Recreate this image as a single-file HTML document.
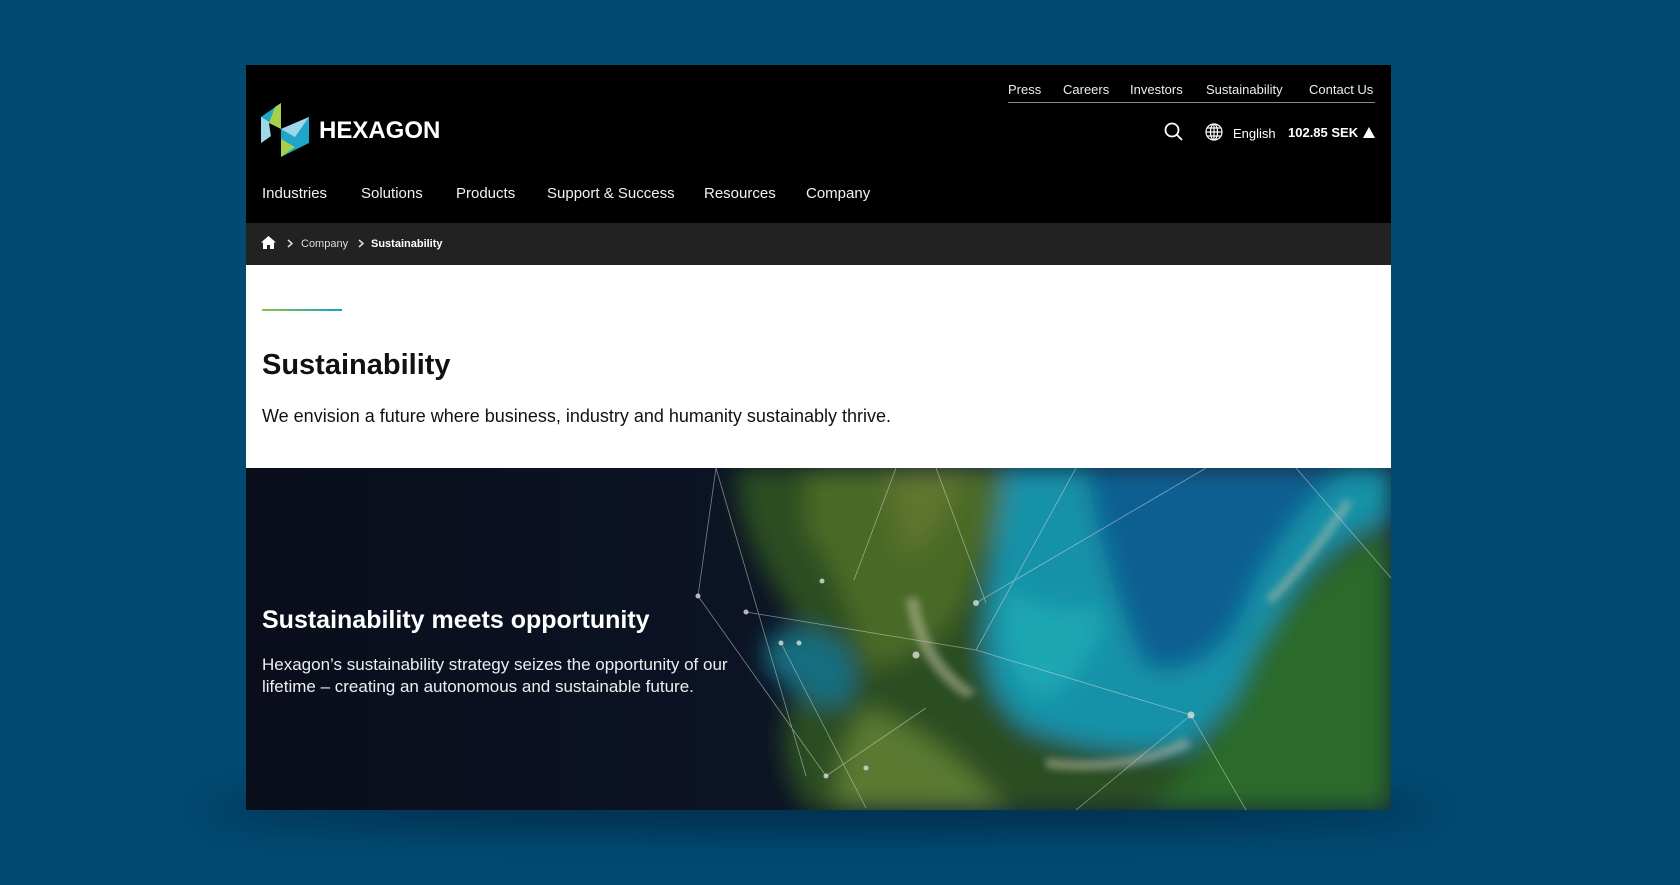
<!DOCTYPE html>
<html><head><meta charset="utf-8"><style>
*{margin:0;padding:0;box-sizing:border-box}
body{width:1680px;height:885px;overflow:hidden;background:#024a72;font-family:"Liberation Sans",sans-serif;position:relative}
.shadow{position:absolute;left:200px;top:790px;width:1240px;height:40px;border-radius:50%;background:rgba(0,20,40,.55);filter:blur(18px)}
.panel{position:absolute;left:246px;top:65px;width:1145px;height:745px;background:#fff;overflow:hidden}
.hdr{position:absolute;left:0;top:0;width:1145px;height:158px;background:#000;color:#fff}
.a{position:absolute;white-space:nowrap}
.top{font-size:13px;top:17px;color:#eee}
.nav{font-size:15px;top:120px;color:#f2f2f2}
.bc{position:absolute;left:0;top:158px;width:1145px;height:42px;background:#222;color:#ddd;font-size:11px}
.hero{position:absolute;left:0;top:403px;width:1145px;height:342px;background:#0b0f1c}
</style></head><body>
<div class="shadow"></div>
<div class="panel">
 <div class="hdr">
  <svg class="a" style="left:15px;top:38px" width="48" height="54" viewBox="0 0 48 54">
   <polygon points="0,14 20,0 20,26 0,40" fill="#1fa5c9"/>
   <polygon points="0,14 20,26 0,40" fill="#9ed8e8"/>
   <polygon points="14,4 20,0 20,26 8,20" fill="#a6cf4c"/>
   <polygon points="20,26 48,14 48,40 20,54" fill="#1fa5c9"/>
   <polygon points="20,26 48,14 34,34" fill="#9ed8e8"/>
   <polygon points="20,36 34,44 20,54" fill="#a6cf4c"/>
   <polygon points="8,20 20,26 10,34" fill="#000"/>
  </svg>
  <div class="a" style="left:73px;top:52px;font-size:24px;font-weight:bold">HEXAGON</div>
  <div class="a top" style="left:762px">Press</div>
  <div class="a top" style="left:817px">Careers</div>
  <div class="a top" style="left:884px">Investors</div>
  <div class="a top" style="left:960px">Sustainability</div>
  <div class="a top" style="left:1063px">Contact Us</div>
  <div class="a" style="left:762px;top:37px;width:367px;height:1px;background:#888"></div>
  <svg class="a" style="left:918px;top:57px" width="20" height="20" viewBox="0 0 20 20"><circle cx="8" cy="8" r="6.5" stroke="#fff" stroke-width="1.8" fill="none"/><line x1="12.8" y1="12.8" x2="18" y2="18" stroke="#fff" stroke-width="1.8"/></svg>
  <svg class="a" style="left:959px;top:58px" width="18" height="18" viewBox="0 0 18 18" fill="none" stroke="#fff" stroke-width="1.2"><circle cx="9" cy="9" r="8"/><ellipse cx="9" cy="9" rx="3.5" ry="8"/><line x1="1" y1="9" x2="17" y2="9"/><line x1="2.5" y1="5" x2="15.5" y2="5"/><line x1="2.5" y1="13" x2="15.5" y2="13"/><line x1="9" y1="1" x2="9" y2="17"/></svg>
  <div class="a" style="left:987px;top:61px;font-size:13px">English</div>
  <div class="a" style="left:1042px;top:60px;font-size:13px;font-weight:bold">102.85 SEK</div>
  <svg class="a" style="left:1117px;top:62px" width="12" height="11"><polygon points="6,0 12,11 0,11" fill="#fff"/></svg>
  <div class="a nav" style="left:16px">Industries</div>
  <div class="a nav" style="left:115px">Solutions</div>
  <div class="a nav" style="left:210px">Products</div>
  <div class="a nav" style="left:301px">Support &amp; Success</div>
  <div class="a nav" style="left:458px">Resources</div>
  <div class="a nav" style="left:560px">Company</div>
 </div>
 <div class="bc">
  <svg class="a" style="left:15px;top:13px" width="15" height="13" viewBox="0 0 15 13"><polygon points="7.5,0 15,6.5 13,6.5 13,13 9,13 9,9 6,9 6,13 2,13 2,6.5 0,6.5" fill="#fff"/></svg>
  <svg class="a" style="left:41px;top:16px" width="6" height="9"><path d="M1,1 L5,4.5 L1,8" stroke="#ddd" stroke-width="1.5" fill="none"/></svg>
  <div class="a" style="left:55px;top:15px">Company</div>
  <svg class="a" style="left:112px;top:16px" width="6" height="9"><path d="M1,1 L5,4.5 L1,8" stroke="#ddd" stroke-width="1.5" fill="none"/></svg>
  <div class="a" style="left:125px;top:15px;font-weight:bold;color:#fff">Sustainability</div>
 </div>
 <div class="a" style="left:16px;top:244px;width:80px;height:2px;background:linear-gradient(90deg,#8cc43f,#0fa3c8)"></div>
 <div class="a" style="left:16px;top:284px;font-size:29px;font-weight:bold;color:#111">Sustainability</div>
 <div class="a" style="left:16px;top:341px;font-size:18px;color:#111">We envision a future where business, industry and humanity sustainably thrive.</div>
 <div class="hero">
  <svg width="1145" height="342" viewBox="0 0 1145 342" style="position:absolute;left:0;top:0">
   <defs>
    <filter id="b"><feGaussianBlur stdDeviation="12"/></filter>
    <filter id="b2"><feGaussianBlur stdDeviation="4"/></filter>
    <linearGradient id="dk" x1="0" x2="1"><stop offset="0" stop-color="#0a0e1b"/><stop offset=".5" stop-color="#0c1426"/><stop offset=".65" stop-color="#10253d"/></linearGradient>
   </defs>
   <rect width="1145" height="342" fill="url(#dk)"/>
   <g filter="url(#b)">
    <path d="M490,0 L1145,0 L1145,342 L560,342 Q520,280 550,220 Q570,180 530,120 Q490,60 490,0Z" fill="#2c4d20"/>
    <path d="M560,0 L800,0 Q740,60 720,130 Q690,190 620,200 Q600,120 560,60Z" fill="#4a6a26"/>
    <path d="M760,0 L1145,0 L1145,50 Q1060,80 1020,170 Q990,240 940,280 Q860,290 780,260 Q730,220 740,150 Q750,60 760,0Z" fill="#1592a8"/>
    <path d="M840,0 L1100,0 Q1030,60 995,150 Q960,210 900,200 Q860,120 840,0Z" fill="#0f5f92"/>
    <path d="M760,120 Q800,150 860,140 Q840,220 790,230 Q750,200 760,120Z" fill="#1fb0b8" opacity=".7"/>
    <path d="M520,170 Q560,150 600,180 Q620,220 590,240 Q550,230 520,200Z" fill="#136e80"/>
    <path d="M1010,180 Q1060,100 1145,70 L1145,342 L900,342 Q960,300 1010,180Z" fill="#2a6a2c"/>
    <path d="M620,240 Q700,270 760,342 L590,342 Q590,280 620,240Z" fill="#5a7a30"/>
    <path d="M640,0 L720,0 Q700,60 660,90Z" fill="#6a7a30" opacity=".7"/>
   </g>
   <g filter="url(#b2)" fill="#c9c4ad" opacity=".5">
    <path d="M660,130 Q670,200 720,230 L730,224 Q680,190 672,130Z"/>
    <path d="M800,290 Q880,300 940,270 L945,278 Q880,310 800,300Z"/>
    <path d="M1020,130 Q1060,90 1100,30 L1106,36 Q1066,96 1026,136Z"/>
   </g>
   <g stroke="#ddd" stroke-opacity=".55" stroke-width=".8" fill="none">
    <path d="M452,128 L580,308 M452,128 L470,0 M470,0 L560,308 M500,144 L730,182 L945,247 M730,182 L830,0 M730,135 L960,0 M608,112 L650,0 M945,247 L830,342 M945,247 L1000,342 M1050,0 L1145,110 M690,0 L740,135 M535,175 L620,340 M580,308 L680,240"/>
   </g>
   <g fill="#ddd" opacity=".8">
    <circle cx="452" cy="128" r="2.5"/><circle cx="500" cy="144" r="2.5"/><circle cx="535" cy="175" r="2.5"/><circle cx="553" cy="175" r="2.5"/><circle cx="576" cy="113" r="2.5"/><circle cx="670" cy="187" r="3.5"/><circle cx="730" cy="135" r="3"/><circle cx="945" cy="247" r="3.5"/><circle cx="580" cy="308" r="2.5"/><circle cx="620" cy="300" r="2.5"/>
   </g>
  </svg>
  <div class="a" style="left:16px;top:138px;font-size:25px;font-weight:bold;color:#fff">Sustainability meets opportunity</div>
  <div class="a" style="left:16px;top:186px;font-size:17px;line-height:22px;color:#eee">Hexagon’s sustainability strategy seizes the opportunity of our<br>lifetime – creating an autonomous and sustainable future.</div>
 </div>
</div>
</body></html>
